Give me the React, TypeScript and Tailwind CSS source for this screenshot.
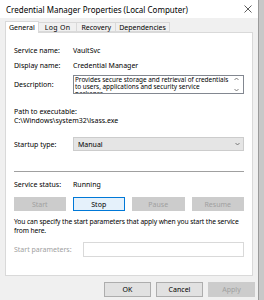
import React from "react";

const font = { fontFamily: '"Noto Sans", "Open Sans", sans-serif' };

function Btn({ label, disabled, focused, className = "" }: { label: string; disabled?: boolean; focused?: boolean; className?: string }) {
  return (
    <div
      className={
        "flex h-[14px] items-center justify-center border text-[7px] " +
        (disabled
          ? "border-[#cccccc] bg-[#cccccc] text-[#a0a0a0] "
          : focused
          ? "border-[#0078d7] bg-[#e5f1fb] text-black "
          : "border-[#adadad] bg-[#e1e1e1] text-black ") +
        className
      }
    >
      {label}
    </div>
  );
}

function Row({ label, children, className = "" }: { label: string; children: React.ReactNode; className?: string }) {
  return (
    <div className={"flex items-center " + className}>
      <div className="w-[59px] shrink-0">{label}</div>
      {children}
    </div>
  );
}

export default function App() {
  return (
    <div className="flex h-[300px] w-[264px] overflow-hidden bg-[#f0f0f0] text-[7px] leading-[9px] text-black" style={font}>
      <div className="flex w-[258px] flex-col">
        {/* Title bar */}
        <div className="flex h-[18px] items-center justify-between bg-white pl-[6px] pr-[5px] text-[8px]">
          <span>Credential Manager Properties (Local Computer)</span>
          <svg width="8" height="8" viewBox="0 0 8 8" className="mr-[1px]">
            <path d="M0.5 0.5 L7.5 7.5 M7.5 0.5 L0.5 7.5" stroke="#333" strokeWidth="0.8" />
          </svg>
        </div>

        {/* Tabs */}
        <div className="mt-[3px] flex h-[11px] items-end pl-[5px]">
          <div className="z-10 -mb-px flex h-[12px] items-center border border-b-0 border-[#d9d9d9] bg-white px-[3px]">General</div>
          <div className="flex h-[10px] items-center border-y border-r border-[#d9d9d9] px-[6px] tracking-[0.3px]">Log On</div>
          <div className="flex h-[10px] items-center border-y border-r border-[#d9d9d9] px-[4px]">Recovery</div>
          <div className="flex h-[10px] items-center border-y border-r border-[#d9d9d9] px-[3px]">Dependencies</div>
        </div>

        {/* Page */}
        <div className="mx-[5px] flex h-[244px] flex-col border border-[#d9d9d9] bg-white px-[8px] pt-[13px]">
          <Row label="Service name:">VaultSvc</Row>
          <Row label="Display name:" className="mt-[6px]">Credential Manager</Row>
          <Row label="Description:" className="mt-[5px]">
            <div className="flex h-[19px] flex-1 overflow-hidden border border-[#828790]">
              <div className="flex-1 overflow-hidden pl-[1px] text-[6.4px] leading-[7px]">
                Provides secure storage and retrieval of credentials to users, applications and security service packages.
              </div>
              <div className="flex w-[14px] flex-col items-center justify-between py-[1px]">
                <svg width="5" height="4" viewBox="0 0 5 4"><path d="M0.5 3 L2.5 1 L4.5 3" fill="none" stroke="#606060" strokeWidth="0.8" /></svg>
                <svg width="5" height="4" viewBox="0 0 5 4"><path d="M0.5 1 L2.5 3 L4.5 1" fill="none" stroke="#606060" strokeWidth="0.8" /></svg>
              </div>
            </div>
          </Row>

          <div className="mt-[13px]">Path to executable:</div>
          <div>C:\Windows\system32\lsass.exe</div>

          <Row label="Startup type:" className="mt-[12px]">
            <div className="flex h-[14px] flex-1 items-center justify-between border border-[#cccccc] bg-[#e5e5e5] pl-[4px] pr-[3px]">
              <span>Manual</span>
              <svg width="5" height="4" viewBox="0 0 5 4"><path d="M0.5 1 L2.5 3 L4.5 1" fill="none" stroke="#606060" strokeWidth="0.8" /></svg>
            </div>
          </Row>

          <div className="mt-[20px] h-px bg-[#a0a0a0]" />

          <Row label="Service status:" className="mt-[8px]">Running</Row>

          <div className="mt-[8px] flex gap-[7px]">
            <Btn label="Start" disabled className="w-[52px]" />
            <Btn label="Stop" focused className="w-[53px]" />
            <Btn label="Pause" disabled className="w-[53px]" />
            <Btn label="Resume" disabled className="w-[53px]" />
          </div>

          <div className="mt-[6px] text-[6.7px] tracking-[-0.1px]">
            You can specify the start parameters that apply when you start the service from here.
          </div>

          <div className="mt-[7px] flex items-center">
            <div className="w-[69px] shrink-0 text-[#a0a0a0]">Start parameters:</div>
            <div className="h-[15px] flex-1 border border-[#d9d9d9]" />
          </div>
        </div>

        {/* Footer */}
        <div className="mt-[6px] flex justify-end gap-[5px] pr-[3px]">
          <Btn label="OK" className="!h-[15px] w-[47px]" />
          <Btn label="Cancel" className="!h-[15px] w-[47px]" />
          <Btn label="Apply" disabled className="!h-[15px] w-[47px]" />
        </div>
      </div>
      <div className="w-[6px] border-l border-[#9a9a9a] bg-[#c8c8c8]" />
    </div>
  );
}
